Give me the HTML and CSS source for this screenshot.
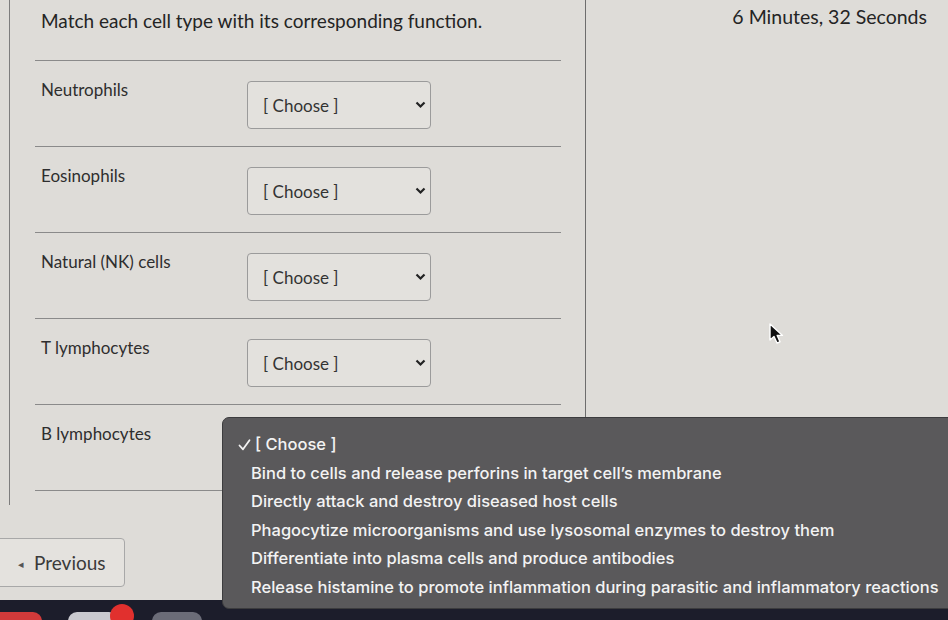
FILE: index.html
```html
<!DOCTYPE html>
<html lang="en">
<head>
    <meta charset="UTF-8">
    <meta name="viewport" content="width=device-width, initial-scale=1.0">
    <title>Quiz - Matching</title>
    <link rel="stylesheet" href="styles.css">
</head>
<body>
    <div id="screen">
        <div id="layout">
            <div id="quiz_panel">
                <h2 class="question_title">Match each cell type with its corresponding function.</h2>

                <div class="match_row">
                    <div class="cell_label">Neutrophils</div>
                    <div class="choose_box"><span>[ Choose ]</span><svg width="11" height="8" viewBox="0 0 11 8"><path d="M1.5 1.5l4 4 4-4" fill="none" stroke="#222" stroke-width="2.2"/></svg></div>
                </div>
                <div class="match_row">
                    <div class="cell_label">Eosinophils</div>
                    <div class="choose_box"><span>[ Choose ]</span><svg width="11" height="8" viewBox="0 0 11 8"><path d="M1.5 1.5l4 4 4-4" fill="none" stroke="#222" stroke-width="2.2"/></svg></div>
                </div>
                <div class="match_row">
                    <div class="cell_label">Natural (NK) cells</div>
                    <div class="choose_box"><span>[ Choose ]</span><svg width="11" height="8" viewBox="0 0 11 8"><path d="M1.5 1.5l4 4 4-4" fill="none" stroke="#222" stroke-width="2.2"/></svg></div>
                </div>
                <div class="match_row">
                    <div class="cell_label">T lymphocytes</div>
                    <div class="choose_box"><span>[ Choose ]</span><svg width="11" height="8" viewBox="0 0 11 8"><path d="M1.5 1.5l4 4 4-4" fill="none" stroke="#222" stroke-width="2.2"/></svg></div>
                </div>
                <div class="match_row">
                    <div class="cell_label">B lymphocytes</div>
                    <!-- this one is open, the menu below sits over it -->
                    <div class="choose_box is_open"><span>[ Choose ]</span><svg width="11" height="8" viewBox="0 0 11 8"><path d="M1.5 1.5l4 4 4-4" fill="none" stroke="#222" stroke-width="2.2"/></svg></div>
                </div>
            </div>
            <div id="timer">6 Minutes, 32 Seconds</div>
        </div>

        <div id="nav_bar">
            <button class="prev_btn"><span class="arrow">&#9666;</span>Previous</button>
        </div>

        <div id="dock">
            <div class="dock_icon red"></div>
            <div class="dock_icon light"><span class="badge"></span></div>
            <div class="dock_icon grey"></div>
        </div>

        <ul id="dropdown_menu">
            <li class="selected"><svg class="mark" width="13" height="12" viewBox="0 0 13 12"><path d="M1.5 6.5l3.5 3.8 6.5-9" fill="none" stroke="#f3f3f3" stroke-width="1.8" stroke-linecap="round" stroke-linejoin="round"/></svg>[ Choose ]</li>
            <li>Bind to cells and release perforins in target cell’s membrane</li>
            <li>Directly attack and destroy diseased host cells</li>
            <li>Phagocytize microorganisms and use lysosomal enzymes to destroy them</li>
            <li>Differentiate into plasma cells and produce antibodies</li>
            <li>Release histamine to promote inflammation during parasitic and inflammatory reactions</li>
        </ul>

        <svg id="cursor" width="18" height="24" viewBox="0 0 18 24">
            <path d="M2 2 L2 18 L6 14.5 L9 21 L12 19.8 L9.2 13.4 L14.5 13.4 Z" fill="#111" stroke="#fff" stroke-width="1.4" stroke-linejoin="round"/>
        </svg>
    </div>
</body>
</html>
```

FILE: styles.css
```css
body {
    margin: 0;
    background-color: #dedcd8;
    font-family: Lato, "Open Sans", sans-serif;
    color: #2e2e2e;
}

#screen {
    position: relative;
    width: 948px;
    height: 620px;
    overflow: hidden;
}

#layout {
    display: flex;
    align-items: flex-start;
}

#quiz_panel {
    margin-left: 9px;
    width: 526px;
    padding: 0 24px 14px 25px;
    border-left: 1px solid #7d7d7d;
    border-right: 1px solid #6d6d6d;
}

.question_title {
    margin: 0;
    padding: 8px 0 26px 6px;
    font-size: 19px;
    line-height: 26px;
    font-weight: 400;
    color: #242424;
    border-bottom: 1px solid #8a8a8a;
}

.match_row {
    display: flex;
    align-items: flex-start;
    padding: 20px 0 17px 6px;
    border-bottom: 1px solid #8a8a8a;
}

.cell_label {
    width: 206px;
    font-size: 17px;
    line-height: 18px;
}

.choose_box {
    display: flex;
    align-items: center;
    justify-content: space-between;
    box-sizing: border-box;
    width: 184px;
    height: 48px;
    padding: 0 4px 0 15px;
    border: 1px solid #9b9b9b;
    border-radius: 4px;
    background-color: #e3e1dd;
    font-size: 17px;
    color: #333;
}

    .choose_box.is_open {
        visibility: hidden;
    }

#timer {
    flex: 1;
    text-align: right;
    padding: 4px 21px 0 0;
    font-size: 19.5px;
    line-height: 26px;
    color: #242424;
}

#nav_bar {
    padding: 33px 0 13px 0;
}

.prev_btn {
    margin-left: -4px;
    width: 129px;
    height: 49px;
    padding: 0 0 0 21px;
    text-align: left;
    border: 1px solid #a8a8a8;
    border-radius: 4px;
    background-color: #e4e2de;
    font-family: Lato, "Open Sans", sans-serif;
    font-size: 19px;
    color: #3a3a3a;
}

    .prev_btn .arrow {
        font-size: 11px;
        margin-right: 10px;
        vertical-align: 2px;
        color: #555;
    }

#dock {
    display: flex;
    gap: 26px;
    height: 20px;
    padding: 12px 0 0 0;
    box-sizing: border-box;
    background-color: #1c1d2b;
}

.dock_icon {
    position: relative;
    width: 50px;
    height: 30px;
    border-radius: 9px;
}

    .dock_icon.red {
        margin-left: -8px;
        background-color: #d23a3a;
    }

    .dock_icon.light {
        background-color: #c9c9cf;
    }

    .dock_icon.grey {
        margin-left: 8px;
        background-color: #6b6c78;
    }

.badge {
    position: absolute;
    top: -8px;
    right: -16px;
    width: 24px;
    height: 24px;
    border-radius: 50%;
    background-color: #e1302e;
}

#dropdown_menu {
    position: absolute;
    left: 222px;
    top: 417px;
    width: 740px;
    margin: 0;
    padding: 12px 0 6px 0;
    list-style: none;
    box-sizing: border-box;
    background-color: #5a595b;
    border: 1px solid #3c3c3e;
    border-radius: 7px;
    font-family: Inter, "Liberation Sans", "DejaVu Sans", sans-serif;
    font-size: 16.5px;
    font-weight: 500;
    color: #f3f3f3;
}

    #dropdown_menu li {
        padding-left: 28px;
        line-height: 28.6px;
        white-space: nowrap;
    }

    #dropdown_menu li.selected {
        padding-left: 15px;
    }

    #dropdown_menu .mark {
        margin-right: 4px;
        vertical-align: -1px;
    }

#cursor {
    position: absolute;
    left: 768px;
    top: 322px;
}
```
